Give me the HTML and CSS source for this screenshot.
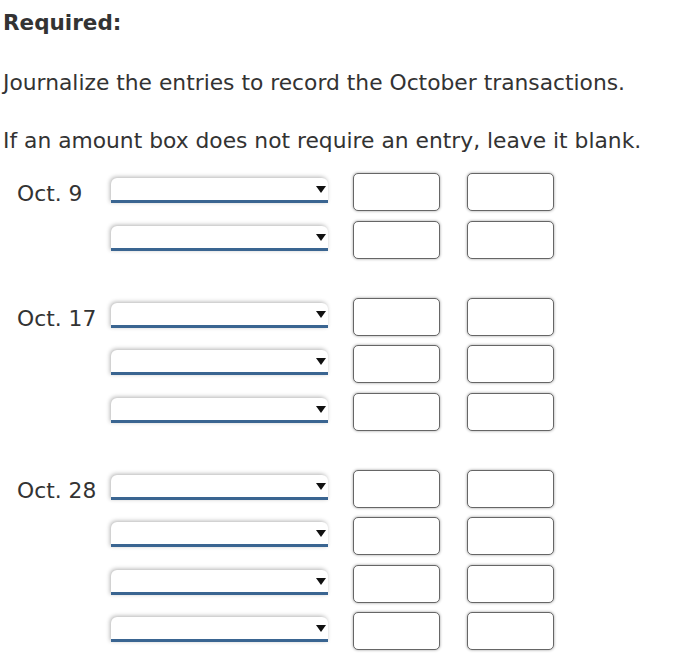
FILE: index.html
```html
<html>
<head>
    <title>Required</title>
    <link rel="stylesheet" href="styles.css">
</head>
<body>
    <h3 class="req">Required:</h3>
    <p class="text">Journalize the entries to record the October transactions.</p>
    <p class="text">If an amount box does not require an entry, leave it blank.</p>

    <div class="journal">
        <div class="entry">
            <div class="date">Oct. 9</div>
            <div class="lines">
                <div class="line">
                    <div class="pick"><select><option></option></select><span class="caret"></span></div>
                    <input class="amt" type="text"><input class="amt" type="text">
                </div>
                <div class="line">
                    <div class="pick"><select><option></option></select><span class="caret"></span></div>
                    <input class="amt" type="text"><input class="amt" type="text">
                </div>
            </div>
        </div>

        <div class="entry">
            <div class="date">Oct. 17</div>
            <div class="lines">
                <div class="line">
                    <div class="pick"><select><option></option></select><span class="caret"></span></div>
                    <input class="amt" type="text"><input class="amt" type="text">
                </div>
                <div class="line">
                    <div class="pick"><select><option></option></select><span class="caret"></span></div>
                    <input class="amt" type="text"><input class="amt" type="text">
                </div>
                <div class="line">
                    <div class="pick"><select><option></option></select><span class="caret"></span></div>
                    <input class="amt" type="text"><input class="amt" type="text">
                </div>
            </div>
        </div>

        <div class="entry">
            <div class="date">Oct. 28</div>
            <div class="lines">
                <div class="line">
                    <div class="pick"><select><option></option></select><span class="caret"></span></div>
                    <input class="amt" type="text"><input class="amt" type="text">
                </div>
                <div class="line">
                    <div class="pick"><select><option></option></select><span class="caret"></span></div>
                    <input class="amt" type="text"><input class="amt" type="text">
                </div>
                <div class="line">
                    <div class="pick"><select><option></option></select><span class="caret"></span></div>
                    <input class="amt" type="text"><input class="amt" type="text">
                </div>
                <div class="line">
                    <div class="pick"><select><option></option></select><span class="caret"></span></div>
                    <input class="amt" type="text"><input class="amt" type="text">
                </div>
            </div>
        </div>
    </div>
</body>
</html>
```

FILE: styles.css
```css
body {
    margin: 0;
    padding: 0 3px;
    font-family: "DejaVu Sans", Verdana, sans-serif;
    font-size: 21.8px;
    color: #333;
    background-color: #fff;
}

.req {
    margin: 0;
    padding-top: 10px;
    font-size: 21.5px;
    font-weight: bold;
    line-height: 26px;
}

.text {
    margin: 34px 0 0 0;
    line-height: 26px;
}

.text + .text {
    margin-top: 32px;
}

.journal {
    margin-top: 19px;
    padding-left: 14px;
}

.entry {
    display: flex;
    margin-bottom: 29.5px;
}

.date {
    width: 94px;
    padding-top: 2px;
    line-height: 38px;
}

.line {
    display: flex;
    align-items: flex-start;
    height: 38px;
    margin-bottom: 9.5px;
}

.pick {
    position: relative;
    width: 217px;
    height: 25px;
    margin-top: 5px;
    margin-right: 25px;
}

.pick select {
    -webkit-appearance: none;
    appearance: none;
    width: 100%;
    height: 100%;
    border: none;
    border-bottom: 3px solid #3a6591;
    border-radius: 6px 6px 0 0;
    background-color: #fff;
    box-shadow: -1px -1px 4px rgba(0, 0, 0, 0.3);
    outline: none;
}

.caret {
    position: absolute;
    right: 2px;
    top: 8px;
    width: 0;
    height: 0;
    border-left: 5px solid transparent;
    border-right: 5px solid transparent;
    border-top: 7px solid #111;
}

.amt {
    box-sizing: border-box;
    width: 87px;
    height: 38px;
    margin: 0 27px 0 0;
    padding: 0 6px;
    border: 1px solid #666;
    border-radius: 5px;
    background-color: #fff;
    box-shadow: 0 0 3px rgba(0, 0, 0, 0.4);
    font-size: 16px;
}
```
